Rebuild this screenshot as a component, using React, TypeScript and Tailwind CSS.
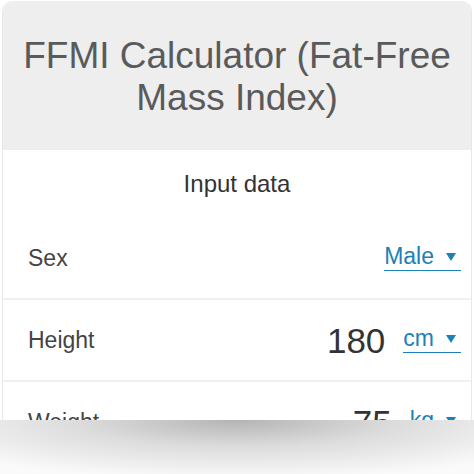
const LINK = "#1d80b7";

function Caret() {
    return (
        <svg width="10" height="8" viewBox="0 0 10 8" className="ml-[12px] mb-[7px]">
            <polygon points="0,0 10,0 5,8" fill={LINK} />
        </svg>
    );
}

function UnitLink({ label }: { label: string }) {
    return (
        <span className="inline-flex items-end leading-none pb-[2px] pr-[5px] border-b-[1.5px] border-[#1d80b7] text-[23px] text-[#1d80b7]">
            <span>{label}</span>
            <Caret />
        </span>
    );
}

function Row({ label, value, unit }: { label: string; value?: string; unit: string }) {
    return (
        <div className="h-[80px] box-content border-b-2 border-[#f0f0f0] flex items-center justify-between pl-[25px] pr-[10px]">
            <span className="text-[23px] text-[#444]">{label}</span>
            <div className="flex items-center">
                {value && <span className="text-[35px] leading-none text-[#333] mr-[18px]">{value}</span>}
                <UnitLink label={unit} />
            </div>
        </div>
    );
}

export default function App() {
    return (
        <div
            className="relative h-[474px] w-[474px] overflow-hidden bg-white"
            style={{ fontFamily: '"Liberation Sans", Arial, sans-serif' }}
        >
            <div className="mx-[2px] mt-[1px] rounded-t-[10px] border-x border-[#e8e8e8] bg-white">
                <div className="h-[149px] rounded-t-[10px] bg-[#eeeeee] pt-[34px] text-center text-[37px] leading-[42px] text-[#5a5a5a]">
                    <div>FFMI Calculator (Fat-Free</div>
                    <div>Mass Index)</div>
                </div>
                <div className="py-[18px] text-center text-[24px] leading-[32px] text-[#333]">Input data</div>
                <Row label="Sex" unit="Male" />
                <Row label="Height" value="180" unit="cm" />
                <Row label="Weight" value="75" unit="kg" />
            </div>
            <div className="absolute left-0 right-0 top-[420px] h-[54px] bg-[radial-gradient(ellipse_75%_110%_at_50%_0%,#b4b4b4_0%,#dcdcdc_45%,#fafafa_100%)]" />
        </div>
    );
}
